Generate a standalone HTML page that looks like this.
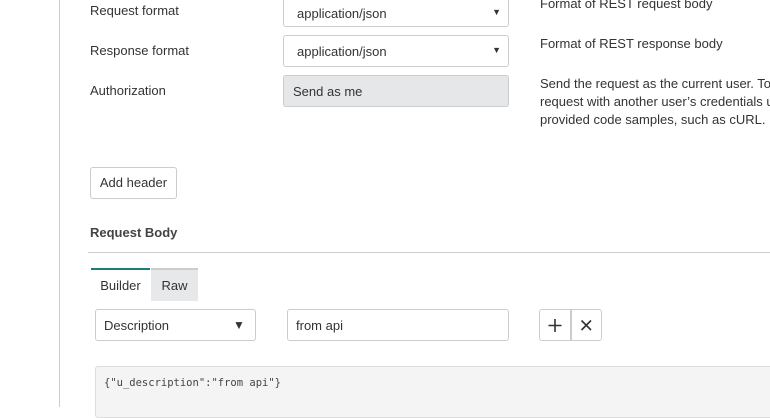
<!DOCTYPE html><html><head><style>
body{margin:0;width:770px;height:407px;overflow:hidden;background:#fff;font-family:"Liberation Sans",sans-serif;font-size:13px;color:#333;position:relative}
.a{position:absolute}
.sel{position:absolute;left:283px;width:224px;height:30px;border:1px solid #ccc;border-radius:3px;background:#fff;box-sizing:content-box}
.sel span{position:absolute;left:13px;top:8px;font-size:13px;color:#333}
.sel i{position:absolute;right:7px;top:9px;font-style:normal;font-size:9px;color:#333}
.lbl{position:absolute;left:90px;font-size:13px;color:#333}
.d{position:absolute;left:540px;font-size:13px;color:#333;line-height:18px;white-space:nowrap}
</style></head><body>
<div class="a" style="left:59px;top:0;width:1px;height:407px;background:#ccc"></div>
<div class="lbl" style="top:3px">Request format</div>
<div class="lbl" style="top:43px">Response format</div>
<div class="lbl" style="top:83px">Authorization</div>
<div class="sel" style="top:-5px"><span style="top:10px">application/json</span><i style="top:11px">▼</i></div>
<div class="sel" style="top:35px"><span>application/json</span><i>▼</i></div>
<div class="sel" style="top:75px;background:#e5e7e9"><span style="left:9px">Send as me</span></div>
<div class="d" style="top:-5px">Format of REST request body</div>
<div class="d" style="top:35px">Format of REST response body</div>
<div class="d" style="top:75px">Send the request as the current user. To<br>request with another user’s credentials u<br>provided code samples, such as cURL.</div>
<div class="a" style="left:90px;top:167px;width:85px;height:30px;border:1px solid #ccc;border-radius:3px;text-align:center;line-height:30px">Add header</div>
<div class="a" style="left:90px;top:225px;font-weight:bold;color:#444">Request Body</div>
<div class="a" style="left:88px;top:252px;width:682px;height:1px;background:#ccc"></div>
<div class="a" style="left:91px;top:268px;width:59px;height:31px;border-top:2px solid #1d7f73;text-align:center;line-height:32px;background:#fff">Builder</div>
<div class="a" style="left:151px;top:268px;width:47px;height:31px;border-top:2px solid #ccc;background:#e6e8ea;text-align:center;line-height:32px">Raw</div>
<div class="a" style="left:95px;top:309px;width:159px;height:30px;border:1px solid #ccc;border-radius:3px"><span class="a" style="left:8px;top:8px">Description</span><span class="a" style="left:137px;top:8px;font-size:12px">▼</span></div>
<div class="a" style="left:287px;top:309px;width:220px;height:30px;border:1px solid #ccc;border-radius:3px"><span class="a" style="left:8px;top:8px">from api</span></div>
<div class="a" style="left:539px;top:309px;width:30px;height:30px;border:1px solid #ccc;border-radius:3px 0 0 3px"><svg width="30" height="30"><path d="M15 9V22M8.5 15.5H21.5" stroke="#333" stroke-width="1.6"/></svg></div>
<div class="a" style="left:571px;top:309px;width:29px;height:30px;border:1px solid #ccc;border-radius:0 3px 3px 0"><svg width="29" height="30"><path d="M9.5 10.5L19 20M19 10.5L9.5 20" stroke="#333" stroke-width="1.6"/></svg></div>
<div class="a" style="left:95px;top:366px;width:680px;height:50px;border:1px solid #ddd;background:#f4f4f4;border-radius:3px"><span class="a" style="left:8px;top:10px;font-family:'DejaVu Sans Mono',monospace;font-size:10.5px;color:#444">{"u_description":"from api"}</span></div>
</body></html>
